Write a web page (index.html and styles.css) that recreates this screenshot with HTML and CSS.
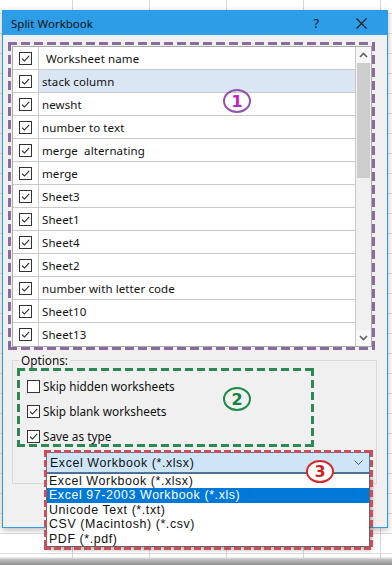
FILE: index.html
```html
<!DOCTYPE html>
<html>
<head>
<meta charset="utf-8">
<title>Split Workbook</title>
<link rel="stylesheet" href="styles.css">
</head>
<body>
<div class="desktop">
  <div class="window">
    <div class="titlebar">
      <span class="title">Split Workbook</span>
      <span class="help">?</span>
      <span class="close"><svg width="11" height="11" viewBox="0 0 11 11"><path d="M0.5 0.5L10.5 10.5M10.5 0.5L0.5 10.5" stroke="#1b1b1b" stroke-width="1.1" fill="none"/></svg></span>
    </div>
    <div class="content">
      <div class="mark-purple">
        <div class="listbox">
          <div class="rows">
            <div class="row"><span class="cbcell"><span class="cb"><svg viewBox="0 0 11 11"><path d="M2 5.6L4.4 8L9.2 2.8" stroke="#262626" stroke-width="1.1" fill="none"/></svg></span></span><span class="name header">Worksheet name</span></div>
            <div class="row selected"><span class="cbcell"><span class="cb"><svg viewBox="0 0 11 11"><path d="M2 5.6L4.4 8L9.2 2.8" stroke="#262626" stroke-width="1.1" fill="none"/></svg></span></span><span class="name">stack column</span></div>
            <div class="row"><span class="cbcell"><span class="cb"><svg viewBox="0 0 11 11"><path d="M2 5.6L4.4 8L9.2 2.8" stroke="#262626" stroke-width="1.1" fill="none"/></svg></span></span><span class="name">newsht</span></div>
            <div class="row"><span class="cbcell"><span class="cb"><svg viewBox="0 0 11 11"><path d="M2 5.6L4.4 8L9.2 2.8" stroke="#262626" stroke-width="1.1" fill="none"/></svg></span></span><span class="name">number to text</span></div>
            <div class="row"><span class="cbcell"><span class="cb"><svg viewBox="0 0 11 11"><path d="M2 5.6L4.4 8L9.2 2.8" stroke="#262626" stroke-width="1.1" fill="none"/></svg></span></span><span class="name">merge&nbsp; alternating</span></div>
            <div class="row"><span class="cbcell"><span class="cb"><svg viewBox="0 0 11 11"><path d="M2 5.6L4.4 8L9.2 2.8" stroke="#262626" stroke-width="1.1" fill="none"/></svg></span></span><span class="name">merge</span></div>
            <div class="row"><span class="cbcell"><span class="cb"><svg viewBox="0 0 11 11"><path d="M2 5.6L4.4 8L9.2 2.8" stroke="#262626" stroke-width="1.1" fill="none"/></svg></span></span><span class="name">Sheet3</span></div>
            <div class="row"><span class="cbcell"><span class="cb"><svg viewBox="0 0 11 11"><path d="M2 5.6L4.4 8L9.2 2.8" stroke="#262626" stroke-width="1.1" fill="none"/></svg></span></span><span class="name">Sheet1</span></div>
            <div class="row"><span class="cbcell"><span class="cb"><svg viewBox="0 0 11 11"><path d="M2 5.6L4.4 8L9.2 2.8" stroke="#262626" stroke-width="1.1" fill="none"/></svg></span></span><span class="name">Sheet4</span></div>
            <div class="row"><span class="cbcell"><span class="cb"><svg viewBox="0 0 11 11"><path d="M2 5.6L4.4 8L9.2 2.8" stroke="#262626" stroke-width="1.1" fill="none"/></svg></span></span><span class="name">Sheet2</span></div>
            <div class="row"><span class="cbcell"><span class="cb"><svg viewBox="0 0 11 11"><path d="M2 5.6L4.4 8L9.2 2.8" stroke="#262626" stroke-width="1.1" fill="none"/></svg></span></span><span class="name">number with letter code</span></div>
            <div class="row"><span class="cbcell"><span class="cb"><svg viewBox="0 0 11 11"><path d="M2 5.6L4.4 8L9.2 2.8" stroke="#262626" stroke-width="1.1" fill="none"/></svg></span></span><span class="name">Sheet10</span></div>
            <div class="row"><span class="cbcell"><span class="cb"><svg viewBox="0 0 11 11"><path d="M2 5.6L4.4 8L9.2 2.8" stroke="#262626" stroke-width="1.1" fill="none"/></svg></span></span><span class="name">Sheet13</span></div>
          </div>
          <div class="scrollbar">
            <span class="arrow"><svg width="9" height="6" viewBox="0 0 9 6"><path d="M1 5L4.5 1.5L8 5" stroke="#606060" stroke-width="1.6" fill="none"/></svg></span>
            <span class="track"><span class="thumb"></span></span>
            <span class="arrow"><svg width="9" height="6" viewBox="0 0 9 6"><path d="M1 1L4.5 4.5L8 1" stroke="#606060" stroke-width="1.6" fill="none"/></svg></span>
          </div>
        </div>
      </div>
      <fieldset class="options">
        <legend class="legend">Options:</legend>
        <div class="mark-green">
          <div class="opt"><span class="cb"></span><span>Skip hidden worksheets</span></div>
          <div class="opt"><span class="cb"><svg viewBox="0 0 11 11"><path d="M2 5.6L4.4 8L9.2 2.8" stroke="#262626" stroke-width="1.1" fill="none"/></svg></span><span>Skip blank worksheets</span></div>
          <div class="opt"><span class="cb"><svg viewBox="0 0 11 11"><path d="M2 5.6L4.4 8L9.2 2.8" stroke="#262626" stroke-width="1.1" fill="none"/></svg></span><span>Save as type</span></div>
        </div>
        <div class="combo-area">
          <div class="combo">
            <span class="combo-text">Excel Workbook (*.xlsx)</span>
            <svg class="chev" width="9" height="5" viewBox="0 0 9 5"><path d="M0.5 0.5L4.5 4.5L8.5 0.5" stroke="#555" stroke-width="1" fill="none"/></svg>
          </div>
          <ul class="dropdown">
            <li class="item">Excel Workbook (*.xlsx)</li>
            <li class="item hl">Excel 97-2003 Workbook (*.xls)</li>
            <li class="item">Unicode Text (*.txt)</li>
            <li class="item">CSV (Macintosh) (*.csv)</li>
            <li class="item">PDF (*.pdf)</li>
          </ul>
          <div class="mark-red"></div>
        </div>
      </fieldset>
    </div>
  </div>
  <span class="badge b1">1</span>
  <span class="badge b2">2</span>
  <span class="badge b3">3</span>
</div>
</body>
</html>
```

FILE: styles.css
```css
html, body {
  margin: 0;
  padding: 0;
}
body {
  width: 392px;
  height: 565px;
  overflow: hidden;
  font-family: "Noto Sans", "Open Sans", sans-serif;
  color: #111;
  background-color: #fff;
  background-image:
    linear-gradient(180deg, transparent 557px, #c4c4c4 559px, #8e8e8e 565px),
    linear-gradient(90deg, #d6d6d6 1px, transparent 1px),
    linear-gradient(180deg, #dedede 1px, transparent 1px);
  background-size: 100% 565px, 77px 100%, 100% 20px;
  background-repeat: no-repeat, repeat-x, repeat-y;
  background-position: 0 0, 72px 0, 0 13px;
}
.desktop {
  position: relative;
  height: 565px;
  padding: 10px 0 0 2px;
  box-sizing: border-box;
}
.window {
  width: 386px;
  height: 518px;
  box-sizing: border-box;
  border: 1px solid #2c9ae4;
  background: #f0f0f0;
  box-shadow: 0 2px 6px rgba(0,0,0,0.28);
  display: flex;
  flex-direction: column;
}
.titlebar {
  height: 24px;
  background: #2e9de7;
  display: flex;
  align-items: center;
  padding-left: 8px;
  flex: none;
}
.title {
  flex: 1;
  font-size: 11.5px;
  color: #111;
}
.help {
  font-size: 12px;
  color: #111;
  margin-right: 37px;
}
.close {
  display: flex;
  margin-right: 20px;
}
.content {
  flex: 1;
  padding: 7px 0 0 5px;
}

/* annotation dashed boxes */
.mark-purple {
  width: 367px;
  box-sizing: border-box;
  padding: 4px 3px 3px 4px;
  background:
    linear-gradient(90deg, #8a6b9c 9px, transparent 9px) 0 0 / 13px 3px repeat-x,
    linear-gradient(90deg, #8a6b9c 9px, transparent 9px) 0 100% / 13px 3px repeat-x,
    linear-gradient(180deg, #8a6b9c 9px, transparent 9px) 0 0 / 3px 13px repeat-y,
    linear-gradient(180deg, #8a6b9c 9px, transparent 9px) 100% 0 / 3px 13px repeat-y;
}
.listbox {
  display: flex;
  border: 1px solid #a9a9a9;
  background: #fff;
}
.rows {
  flex: 1;
  display: flex;
  flex-direction: column;
}
.row {
  height: 23px;
  box-sizing: border-box;
  display: flex;
  border-bottom: 1px solid #c9c9c9;
  border-right: 1px solid #c9c9c9;
}
.row:last-child {
  border-bottom: none;
}
.cbcell {
  width: 25px;
  flex: none;
  border-right: 1px solid #c9c9c9;
  display: flex;
  align-items: center;
  justify-content: center;
}
.cb {
  width: 13px;
  height: 13px;
  box-sizing: border-box;
  border: 1px solid #333;
  background: #fff;
  display: flex;
  align-items: center;
  justify-content: center;
  flex: none;
}
.cb svg {
  width: 11px;
  height: 11px;
}
.name {
  flex: 1;
  display: flex;
  align-items: center;
  padding-left: 3px;
  font-size: 11.5px;
  letter-spacing: 0.1px;
  color: #111;
}
.name.header {
  padding-left: 7px;
}
.row.selected .name {
  background: #dbe6f4;
}
.scrollbar {
  width: 15px;
  flex: none;
  background: #f0f0f0;
  display: flex;
  flex-direction: column;
}
.arrow {
  height: 16px;
  display: flex;
  align-items: center;
  justify-content: center;
  background: #f7f7f7;
}
.track {
  flex: 1;
  display: flex;
  flex-direction: column;
}
.thumb {
  height: 115px;
  margin: 0 1px;
  background: #cdcdcd;
}

/* options group */
.options {
  margin: 3px 0 0 4px;
  padding: 0;
  width: 365px;
  height: 131px;
  box-sizing: border-box;
  border: 1px solid #d9d9d9;
  min-inline-size: 0;
}
.legend {
  margin-left: 6px;
  padding: 0 2px;
  font-size: 11.8px;
  line-height: 15px;
  color: #111;
}
.mark-green {
  margin-left: 4px;
  width: 297px;
  height: 79px;
  box-sizing: border-box;
  padding: 8px 0 0 10px;
  display: flex;
  flex-direction: column;
  gap: 5px;
  background:
    linear-gradient(90deg, #2b8a52 8px, transparent 8px) 0 0 / 12px 3px repeat-x,
    linear-gradient(90deg, #2b8a52 8px, transparent 8px) 0 100% / 12px 3px repeat-x,
    linear-gradient(180deg, #2b8a52 8px, transparent 8px) 0 0 / 3px 12px repeat-y,
    linear-gradient(180deg, #2b8a52 8px, transparent 8px) 100% 0 / 3px 12px repeat-y;
}
.opt {
  height: 20px;
  flex: none;
  display: flex;
  align-items: center;
  gap: 3px;
  font-size: 11.8px;
  color: #111;
}
.combo-area {
  position: relative;
  margin: 5px 0 0 33px;
  width: 324px;
}
.combo {
  height: 21px;
  box-sizing: border-box;
  border: 1px solid #3f7cbd;
  background: #cde5f7;
  display: flex;
  align-items: center;
  padding: 0 6px 0 3px;
}
.combo-text {
  flex: 1;
  font-family: "Liberation Sans", Arial, sans-serif;
  font-size: 12.4px;
  letter-spacing: 0.6px;
  color: #111;
}
.dropdown {
  position: absolute;
  top: 21px;
  left: 0;
  width: 324px;
  box-sizing: border-box;
  margin: 0;
  padding: 0;
  list-style: none;
  background: #fff;
  border: 1px solid #646464;
  box-shadow: 2px 3px 4px rgba(0,0,0,0.28);
}
.item {
  height: 14.4px;
  line-height: 14.4px;
  padding-left: 2px;
  font-family: "Liberation Sans", Arial, sans-serif;
  font-size: 12.4px;
  letter-spacing: 0.6px;
  color: #111;
  white-space: nowrap;
}
.item.hl {
  background: #0078d7;
  color: #fff;
}
.mark-red {
  position: absolute;
  top: -2px;
  left: -2px;
  width: 329px;
  height: 100px;
  background:
    linear-gradient(90deg, #cf4d56 7px, transparent 7px) 0 0 / 10px 3px repeat-x,
    linear-gradient(90deg, #cf4d56 7px, transparent 7px) 0 100% / 10px 3px repeat-x,
    linear-gradient(180deg, #cf4d56 7px, transparent 7px) 0 0 / 3px 10px repeat-y,
    linear-gradient(180deg, #cf4d56 7px, transparent 7px) 100% 0 / 3px 10px repeat-y;
  pointer-events: none;
}

/* numbered badges */
.badge {
  position: absolute;
  width: 28px;
  height: 24px;
  box-sizing: border-box;
  border-radius: 50%;
  display: flex;
  align-items: center;
  justify-content: center;
  font-family: "DejaVu Sans", sans-serif;
  font-weight: bold;
  font-size: 16px;
}
.b1 {
  left: 223px;
  top: 89px;
  border: 2px solid #9452b0;
  color: #c21fc2;
}
.b2 {
  left: 223px;
  top: 387px;
  border: 2px solid #1b8b45;
  color: #168240;
}
.b3 {
  left: 306px;
  top: 460px;
  height: 23px;
  border: 2.5px solid #d32a2a;
  background: #fff;
  color: #d41f1f;
}
```
